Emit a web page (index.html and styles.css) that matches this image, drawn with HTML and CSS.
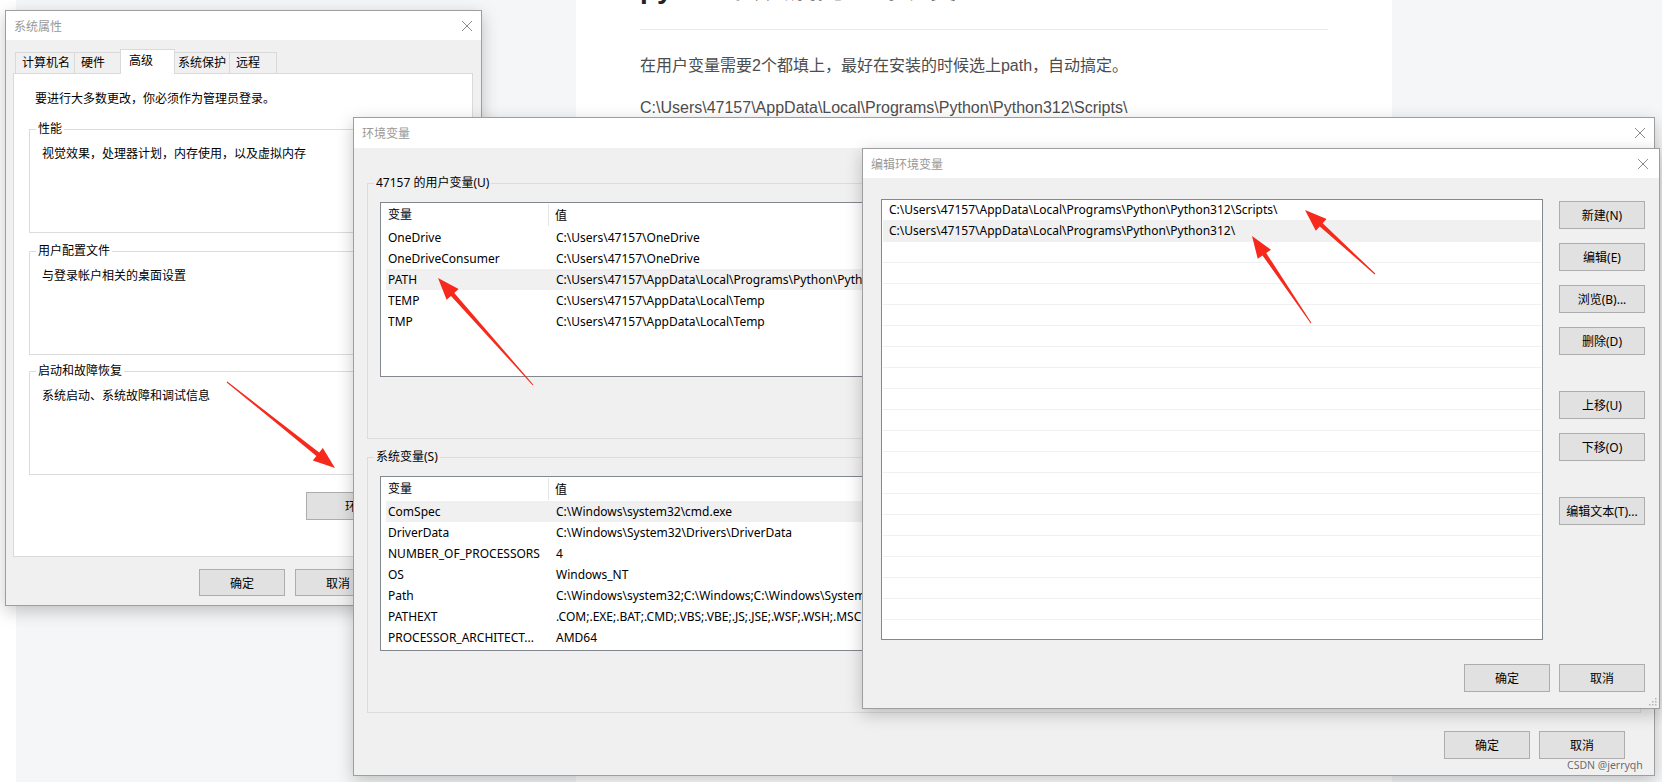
FILE: index.html
```html
<!DOCTYPE html>
<html lang="zh-CN">
<head>
    <meta charset="UTF-8">
    <meta name="viewport" content="width=device-width, initial-scale=1.0">
    <title>环境变量</title>
    <link rel="stylesheet" href="styles.css">
</head>
<body>
    <!-- blog page behind the dialogs -->
    <div class="page">
        <div class="page-edge"></div>
        <div class="page-side"></div>
        <main class="article">
            <h1 class="article-title">python安装后配置环境变量</h1>
            <p>在用户变量需要2个都填上，最好在安装的时候选上path，自动搞定。</p>
            <p>C:\Users\47157\AppData\Local\Programs\Python\Python312\Scripts\</p>
            <p>C:\Users\47157\AppData\Local\Programs\Python\Python312\</p>
        </main>
        <div class="page-side right"></div>
    </div>

    <!-- 系统属性 -->
    <div class="win sysprop">
        <div class="titlebar">
            <span>系统属性</span>
            <svg class="close" viewBox="0 0 10 10"><path d="M0 0L10 10M10 0L0 10"/></svg>
        </div>
        <div class="sys-body">
            <div class="tabs">
                <div class="tab t1">计算机名</div>
                <div class="tab t2">硬件</div>
                <div class="tab t3 active">高级</div>
                <div class="tab t4">系统保护</div>
                <div class="tab t5">远程</div>
            </div>
            <div class="tab-panel">
                <p class="note">要进行大多数更改，你必须作为管理员登录。</p>
                <fieldset class="group sys-group">
                    <legend>性能</legend>
                    <p>视觉效果，处理器计划，内存使用，以及虚拟内存</p>
                </fieldset>
                <fieldset class="group sys-group">
                    <legend>用户配置文件</legend>
                    <p>与登录帐户相关的桌面设置</p>
                </fieldset>
                <fieldset class="group sys-group">
                    <legend>启动和故障恢复</legend>
                    <p>系统启动、系统故障和调试信息</p>
                </fieldset>
                <button class="btn btn-env">环境变量(N)...</button>
            </div>
            <div class="sys-footer">
                <button class="btn">确定</button>
                <button class="btn">取消</button>
                <button class="btn">应用(A)</button>
            </div>
        </div>
    </div>

    <!-- 环境变量 -->
    <div class="win envvars">
        <div class="titlebar">
            <span>环境变量</span>
            <svg class="close" viewBox="0 0 10 10"><path d="M0 0L10 10M10 0L0 10"/></svg>
        </div>
        <div class="env-body">
            <fieldset class="group env-group">
                <legend>47157 的用户变量(U)</legend>
                <div class="listview">
                    <div class="lv-head"><span class="col-name">变量</span><span class="col-value">值</span></div>
                    <div class="lv-row"><span class="col-name">OneDrive</span><span class="col-value">C:\Users\47157\OneDrive</span></div>
                    <div class="lv-row"><span class="col-name">OneDriveConsumer</span><span class="col-value">C:\Users\47157\OneDrive</span></div>
                    <div class="lv-row sel"><span class="col-name">PATH</span><span class="col-value">C:\Users\47157\AppData\Local\Programs\Python\Python312\Scripts\;C:\Users\47157\AppData\Local\Programs\Python\Python312\;</span></div>
                    <div class="lv-row"><span class="col-name">TEMP</span><span class="col-value">C:\Users\47157\AppData\Local\Temp</span></div>
                    <div class="lv-row"><span class="col-name">TMP</span><span class="col-value">C:\Users\47157\AppData\Local\Temp</span></div>
                </div>
            </fieldset>
            <fieldset class="group env-group">
                <legend>系统变量(S)</legend>
                <div class="listview">
                    <div class="lv-head"><span class="col-name">变量</span><span class="col-value">值</span></div>
                    <div class="lv-row sel"><span class="col-name">ComSpec</span><span class="col-value">C:\Windows\system32\cmd.exe</span></div>
                    <div class="lv-row"><span class="col-name">DriverData</span><span class="col-value">C:\Windows\System32\Drivers\DriverData</span></div>
                    <div class="lv-row"><span class="col-name">NUMBER_OF_PROCESSORS</span><span class="col-value">4</span></div>
                    <div class="lv-row"><span class="col-name">OS</span><span class="col-value">Windows_NT</span></div>
                    <div class="lv-row"><span class="col-name">Path</span><span class="col-value">C:\Windows\system32;C:\Windows;C:\Windows\System32\Wbem;</span></div>
                    <div class="lv-row"><span class="col-name">PATHEXT</span><span class="col-value">.COM;.EXE;.BAT;.CMD;.VBS;.VBE;.JS;.JSE;.WSF;.WSH;.MSC</span></div>
                    <div class="lv-row"><span class="col-name">PROCESSOR_ARCHITECT...</span><span class="col-value">AMD64</span></div>
                </div>
            </fieldset>
            <div class="env-footer">
                <button class="btn">确定</button>
                <button class="btn">取消</button>
            </div>
        </div>
    </div>

    <!-- 编辑环境变量 -->
    <div class="win editenv">
        <div class="titlebar">
            <span>编辑环境变量</span>
            <svg class="close" viewBox="0 0 10 10"><path d="M0 0L10 10M10 0L0 10"/></svg>
        </div>
        <div class="edit-body">
            <div class="path-list">
                <div class="path-row">C:\Users\47157\AppData\Local\Programs\Python\Python312\Scripts\</div>
                <div class="path-row sel">C:\Users\47157\AppData\Local\Programs\Python\Python312\</div>
                <div class="path-row"></div>
                <div class="path-row"></div>
                <div class="path-row"></div>
                <div class="path-row"></div>
                <div class="path-row"></div>
                <div class="path-row"></div>
                <div class="path-row"></div>
                <div class="path-row"></div>
                <div class="path-row"></div>
                <div class="path-row"></div>
                <div class="path-row"></div>
                <div class="path-row"></div>
                <div class="path-row"></div>
                <div class="path-row"></div>
                <div class="path-row"></div>
                <div class="path-row"></div>
                <div class="path-row"></div>
                <div class="path-row"></div>
                <div class="path-row"></div>
            </div>
            <div class="edit-actions">
                <button class="btn">新建(N)</button>
                <button class="btn">编辑(E)</button>
                <button class="btn">浏览(B)...</button>
                <button class="btn">删除(D)</button>
                <button class="btn spaced">上移(U)</button>
                <button class="btn">下移(O)</button>
                <button class="btn spaced">编辑文本(T)...</button>
            </div>
            <div class="edit-footer">
                <button class="btn">确定</button>
                <button class="btn">取消</button>
            </div>
        </div>
        <svg class="grip" viewBox="0 0 9 9">
            <rect x="7" y="1" width="1.5" height="1.5"/>
            <rect x="4" y="4" width="1.5" height="1.5"/>
            <rect x="7" y="4" width="1.5" height="1.5"/>
            <rect x="1" y="7" width="1.5" height="1.5"/>
            <rect x="4" y="7" width="1.5" height="1.5"/>
            <rect x="7" y="7" width="1.5" height="1.5"/>
        </svg>
    </div>

    <!-- red annotation arrows -->
    <svg class="arrows" viewBox="0 0 1662 782">
        <polygon points="226.7,382.4 316.4,456.0 312.8,460.6 335,468 322.8,448.0 319.2,452.6 227.3,381.6"/>
        <polygon points="533.4,384.7 454.3,293.0 458.6,289.1 438,278 446.6,299.8 451.0,295.9 532.6,385.3"/>
        <polygon points="1375.3,273.6 1322.7,223.2 1326.6,219.0 1305,210 1315.8,230.8 1319.8,226.5 1374.7,274.4"/>
        <polygon points="1311.4,322.7 1266.2,253.0 1271.0,249.7 1252,236 1257.7,258.7 1262.5,255.4 1310.6,323.3"/>
    </svg>

    <div class="watermark">CSDN @jerryqh</div>
</body>
</html>
```

FILE: styles.css
```css
* {
    box-sizing: border-box;
}

body {
    margin: 0;
    width: 1662px;
    height: 782px;
    overflow: hidden;
    position: relative;
    font-family: "Noto Sans", "Noto Sans CJK SC", sans-serif;
    font-size: 12px;
    color: #000;
}

/* blog page */
.page {
    display: flex;
    height: 782px;
}

.page-edge {
    width: 16px;
    background: #fff;
}

.page-side {
    width: 560px;
    background: #f5f6f7;
}

.page-side.right {
    flex: 1;
}

.article {
    width: 816px;
    padding: 0 64px;
    background: #fff;
    font-family: "Liberation Sans", "Noto Sans CJK SC", sans-serif;
    font-size: 16px;
    line-height: 26px;
    color: #4d4d4d;
}

.article-title {
    margin: -31px 0 23px;
    padding-bottom: 20px;
    border-bottom: 1px solid #e8e8ed;
    font-size: 28px;
    line-height: 40px;
    color: #222226;
}

.article p {
    margin: 0 0 16px;
}

/* windows */
.win {
    position: absolute;
    display: flex;
    flex-direction: column;
    background: #f0f0f0;
    border: 1px solid #9e9e9e;
    box-shadow: 0 5px 16px rgba(0,0,0,0.22);
}

.titlebar {
    flex: none;
    display: flex;
    align-items: center;
    justify-content: space-between;
    padding: 0 9px 0 8px;
    background: #fff;
    color: #999;
}

.close {
    width: 10px;
    height: 10px;
    stroke: #8c8c8c;
    stroke-width: 1;
    fill: none;
}

.btn {
    width: 86px;
    height: 28px;
    padding: 0;
    background: #e1e1e1;
    border: 1px solid #adadad;
    font: inherit;
    color: #000;
}

.group {
    margin: 0;
    border: 1px solid #dcdcdc;
    min-width: 0;
}

.group legend {
    margin-left: -6px;
    padding: 0 2px;
    line-height: 16px;
}

.group p {
    margin: 0;
    line-height: 16px;
}

/* 系统属性 */
.sysprop {
    left: 5px;
    top: 10px;
    width: 477px;
    height: 596px;
}

.sysprop .titlebar {
    height: 29px;
}

.sys-body {
    padding: 9px 8px 0 7px;
}

.tabs {
    display: flex;
    align-items: flex-end;
    height: 24px;
    padding-left: 2px;
}

.tab {
    height: 21px;
    margin-left: -1px;
    padding-left: 6px;
    border: 1px solid #d9d9d9;
    border-bottom: none;
    line-height: 19px;
}

.tab.t1 { width: 60px; margin-left: 0; }
.tab.t2 { width: 48px; }
.tab.t4 { width: 59px; }
.tab.t5 { width: 48px; }

.tab.active {
    position: relative;
    z-index: 1;
    width: 55px;
    height: 25px;
    margin: 0 -3px -1px -2px;
    padding-left: 8px;
    background: #fff;
    line-height: 22px;
}

.tab-panel {
    display: flex;
    flex-direction: column;
    height: 484px;
    padding: 17px 14px 0 15px;
    background: #fff;
    border: 1px solid #d9d9d9;
}

.note {
    margin: 0 0 14px 6px;
    line-height: 16px;
}

.sys-group {
    height: 112px;
    padding: 9px 12px 0;
    margin-bottom: 10px;
}

.sys-group + .sys-group + .sys-group {
    margin-top: -2px;
}

.btn-env {
    align-self: flex-end;
    width: 152px;
    margin-top: 7px;
}

.sys-footer {
    display: flex;
    justify-content: flex-end;
    gap: 10px;
    margin: 12px -4px 0 0;
}

.sys-footer .btn {
    height: 27px;
}

/* 环境变量 */
.envvars {
    left: 353px;
    top: 117px;
    width: 1302px;
    height: 659px;
}

.envvars .titlebar {
    height: 30px;
}

.env-body {
    padding: 27px 13px 0;
}

.env-group {
    height: 264px;
    padding: 11px 12px 0;
}

.env-group + .env-group {
    margin-top: 10px;
}

.listview {
    height: 175px;
    overflow: hidden;
    background: #fff;
    border: 1px solid #828790;
}

.lv-head {
    display: flex;
    align-items: center;
    height: 24px;
}

.lv-head .col-name {
    width: 168px;
    padding-left: 7px;
    border-right: 1px solid #e5e5e5;
    line-height: 22px;
}

.lv-head .col-value {
    padding-left: 6px;
}

.lv-row {
    display: flex;
    align-items: center;
    height: 21px;
    margin: 0 5px;
    padding-left: 2px;
    white-space: nowrap;
}

.lv-row.sel {
    background: #f0f0f0;
}

.lv-row .col-name {
    flex: none;
    width: 168px;
    overflow: hidden;
}

.env-footer {
    display: flex;
    justify-content: flex-end;
    gap: 9px;
    margin-top: 18px;
    padding-right: 16px;
}

/* 编辑环境变量 */
.editenv {
    left: 862px;
    top: 148px;
    width: 798px;
    height: 561px;
}

.editenv .titlebar {
    height: 29px;
    padding-right: 11px;
}

.edit-body {
    display: grid;
    grid-template-columns: 1fr 86px;
    column-gap: 16px;
    padding: 21px 14px 0 18px;
}

.path-list {
    height: 441px;
    overflow: hidden;
    background: #fff;
    border: 1px solid #828790;
}

.path-row {
    height: 21px;
    margin: 0 1px;
    padding-left: 6px;
    border-bottom: 1px solid #f0f0f0;
    line-height: 20px;
    white-space: nowrap;
}

.path-row.sel {
    background: #f0f0f0;
}

.edit-actions {
    display: flex;
    flex-direction: column;
    gap: 14px;
    padding-top: 2px;
}

.edit-actions .spaced {
    margin-top: 22px;
}

.edit-footer {
    grid-column: 1 / -1;
    display: flex;
    justify-content: flex-end;
    gap: 9px;
    margin-top: 24px;
}

.grip {
    position: absolute;
    right: 2px;
    bottom: 2px;
    width: 9px;
    height: 9px;
    fill: #b4b4b4;
}

/* annotations */
.arrows {
    position: absolute;
    left: 0;
    top: 0;
    width: 1662px;
    height: 782px;
    fill: #f52a1c;
    pointer-events: none;
}

.watermark {
    position: absolute;
    left: 1567px;
    top: 757px;
    font-size: 10.5px;
    line-height: 16px;
    color: rgba(70,70,70,0.8);
}
```
